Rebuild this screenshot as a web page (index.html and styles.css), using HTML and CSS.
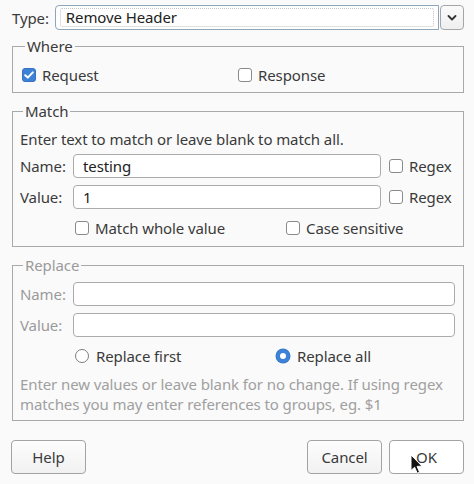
FILE: index.html
```html
<!DOCTYPE html>
<html>
<head>
<meta charset="utf-8">
<link rel="stylesheet" href="styles.css">
</head>
<body>
<div class="dialog">
  <div class="type-row">
    <span class="type-label">Type:</span>
    <div class="combo"><div class="combo-focus">Remove Header</div></div>
    <div class="combo-btn">
      <svg width="10" height="6" viewBox="0 0 10 6"><path d="M1.5 1 L5 4.5 L8.5 1" fill="none" stroke="#333" stroke-width="1.8" stroke-linecap="round" stroke-linejoin="round"/></svg>
    </div>
  </div>

  <fieldset class="group where">
    <legend>Where</legend>
    <div class="where-row">
      <label class="opt"><span class="check on"><svg width="10" height="8" viewBox="0 0 10 8"><path d="M1.2 4.2 L3.8 6.6 L8.8 1.4" fill="none" stroke="#fff" stroke-width="2" stroke-linecap="round" stroke-linejoin="round"/></svg></span>Request</label>
      <label class="opt"><span class="check"></span>Response</label>
    </div>
  </fieldset>

  <fieldset class="group match">
    <legend>Match</legend>
    <div class="hint-top">Enter text to match or leave blank to match all.</div>
    <div class="field-grid">
      <span class="flabel">Name:</span>
      <div class="input">testing</div>
      <label class="opt"><span class="check"></span>Regex</label>
      <span class="flabel">Value:</span>
      <div class="input">1</div>
      <label class="opt"><span class="check"></span>Regex</label>
    </div>
    <div class="opts-row">
      <label class="opt first-wide"><span class="check"></span>Match whole value</label>
      <label class="opt"><span class="check"></span>Case sensitive</label>
    </div>
  </fieldset>

  <fieldset class="group replace">
    <legend>Replace</legend>
    <div class="field-grid wide">
      <span class="flabel">Name:</span>
      <div class="input"></div>
      <span class="flabel">Value:</span>
      <div class="input"></div>
    </div>
    <div class="opts-row radios">
      <label class="opt first-radio"><span class="radio"></span>Replace first</label>
      <label class="opt"><span class="radio on"></span>Replace all</label>
    </div>
    <div class="hint-bottom">Enter new values or leave blank for no change. If using regex matches you may enter references to groups, eg. $1</div>
  </fieldset>

  <div class="buttons">
    <button class="btn">Help</button>
    <div class="spacer"></div>
    <button class="btn">Cancel</button>
    <button class="btn ok">OK</button>
  </div>
</div>
<svg class="cursor" width="14" height="21" viewBox="0 0 14 21"><path d="M1 1 L1 16.5 L4.6 13.2 L7.2 19.2 L9.6 18.2 L7.1 12.4 L12 12.2 Z" fill="#111" stroke="#fff" stroke-width="1" stroke-linejoin="round"/></svg>
</body>
</html>
```

FILE: styles.css
```css
html, body {
  margin: 0;
  padding: 0;
  background: #fafafa;
}
body {
  width: 474px;
  height: 484px;
  overflow: hidden;
  position: relative;
  font-family: "Noto Sans", "DejaVu Sans", sans-serif;
  font-size: 15px;
  letter-spacing: -0.1px;
  color: #3a3a3a;
}
.dialog {
  padding: 5px 10px 0 12px;
}
.type-row {
  display: flex;
  align-items: center;
  height: 25px;
}
.type-label {
  width: 43px;
}
.combo {
  box-sizing: border-box;
  width: 386px;
  height: 25px;
  border: 1px solid #8ea6bb;
  border-radius: 4px 0 0 4px;
  background: #fff;
  padding: 2px 4px;
}
.combo-focus {
  box-sizing: border-box;
  height: 19px;
  border: 1px dotted #c4c4c4;
  border-radius: 2px;
  line-height: 17px;
  padding-left: 5px;
  color: #222;
}
.combo-btn {
  box-sizing: border-box;
  width: 24px;
  height: 25px;
  margin-left: 1px;
  border: 1px solid #a6a6a6;
  border-radius: 4px;
  background: linear-gradient(#fafafa, #efefef);
  display: flex;
  align-items: center;
  justify-content: center;
}
.group {
  margin: 0;
  border: 1px solid #a9a9a9;
  padding: 0;
  min-width: 0;
}
.group legend {
  margin-left: 3px;
  padding: 0 2px;
  line-height: 18px;
  height: 18px;
}
.where {
  margin-top: 7px;
  padding: 9px 0 6px 9px;
}
.where-row {
  display: grid;
  grid-template-columns: 216px 1fr;
  height: 22px;
  align-items: center;
}
.opt {
  display: flex;
  align-items: center;
  white-space: nowrap;
  height: 22px;
}
.check {
  box-sizing: border-box;
  width: 14px;
  height: 14px;
  border: 1px solid #8a8a8a;
  border-radius: 3px;
  background: #fff;
  margin-right: 6px;
  flex: none;
  display: flex;
  align-items: center;
  justify-content: center;
}
.check.on {
  background: #3d82d6;
  border-color: #3573c2;
}
.radio {
  box-sizing: border-box;
  width: 14px;
  height: 14px;
  border: 1px solid #7e7e7e;
  border-radius: 50%;
  background: #fff;
  margin-right: 7px;
  flex: none;
}
.radio.on {
  border: 4px solid #3d82d6;
  background: #fff;
  box-shadow: 0 0 0 0.5px #3573c2;
}
.match {
  margin-top: 9px;
  padding: 9px 9px 7px 7px;
}
.hint-top {
  line-height: 20px;
  height: 20px;
}
.field-grid {
  display: grid;
  grid-template-columns: 53px 308px auto;
  column-gap: 0;
  row-gap: 7px;
  align-items: center;
  margin-top: 5px;
}
.field-grid .opt {
  margin-left: 8px;
}
.input {
  box-sizing: border-box;
  height: 24px;
  border: 1px solid #ababab;
  border-radius: 4px;
  background: #fff;
  line-height: 22px;
  padding-left: 9px;
  color: #222;
}
.opts-row {
  display: flex;
  align-items: center;
  margin-top: 8px;
  padding-left: 55px;
}
.first-wide {
  width: 211px;
}
.replace {
  margin-top: 9px;
  padding: 8px 7px 6px 7px;
  color: #9a9a9a;
}
.replace .field-grid {
  grid-template-columns: 53px 382px;
  margin-top: 0;
}
.replace .flabel {
  color: #9a9a9a;
}
.radios {
  color: #3a3a3a;
  margin-top: 8px;
}
.first-radio {
  width: 201px;
}
.hint-bottom {
  margin-top: 7px;
  line-height: 20px;
  color: #a0a0a0;
  padding-right: 4px;
}
.buttons {
  display: flex;
  margin-top: 19px;
  width: 453px;
  margin-left: -1px;
}
.spacer {
  flex: 1;
}
.btn {
  box-sizing: border-box;
  width: 75px;
  height: 34px;
  border: 1px solid #a3a3a3;
  border-radius: 4px;
  background: linear-gradient(#fdfdfd, #f1f1f1);
  font-family: inherit;
  font-size: 15px;
  letter-spacing: -0.1px;
  color: #3a3a3a;
  padding: 0;
}
.btn.ok {
  margin-left: 7px;
  background: #fff;
}
.cursor {
  position: absolute;
  left: 410px;
  top: 454px;
}
```
